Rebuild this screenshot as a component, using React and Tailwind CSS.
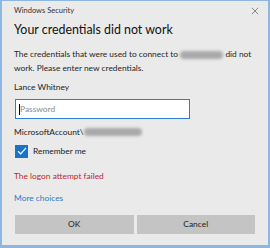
const Blur = ({ w }) => (
  <span className={`inline-block h-[8px] ${w} rounded-sm bg-[#a9a9a9] blur-[1.5px] align-middle`}></span>
);

export default function App() {
  return (
    <div className="w-[270px] h-[248px] overflow-hidden bg-[#8cb7e2] pt-px px-[2px] pb-[3px] font-['Lato',sans-serif]">
      <div className="h-full bg-[#eaeaea] text-[#1a1a1a]">
        {/* Title bar */}
        <div className="h-5 flex items-center justify-between pl-3 pr-[9px]">
          <span className="text-[7.5px] text-[#333]">Windows Security</span>
          <svg className="w-[8px] h-[8px]" viewBox="0 0 10 10" stroke="#6f6f6f" strokeWidth="1">
            <path d="M1 1L9 9M9 1L1 9" />
          </svg>
        </div>

        <div className="px-[12px]">
          <h1 className="text-[12.4px] leading-[18px] text-[#111]">Your credentials did not work</h1>

          <p className="mt-[8px] text-[8.4px] leading-[14px] text-[#1f1f1f] whitespace-nowrap">
            The credentials that were used to connect to <Blur w="w-[43px]" /> did not
            <br />
            work. Please enter new credentials.
          </p>

          <div className="mt-[5px] text-[8.4px] leading-[14px]">Lance Whitney</div>

          <div className="mt-[5px] ml-px w-[175px] h-[20px] border border-[#2d7ed3] bg-white flex items-center pl-[3px]">
            <span className="w-px h-[11px] bg-black"></span>
            <span className="text-[8.4px] text-[#8a8a8a]">Password</span>
          </div>

          <div className="mt-[6px] text-[8.4px] leading-[14px] flex items-center">
            MicrosoftAccount\<Blur w="w-[58px]" />
          </div>

          <div className="mt-[5px] ml-px flex items-center gap-[5px] h-[14px]">
            <span className="w-[13px] h-[13px] bg-[#1a73c9] flex items-center justify-center">
              <svg className="w-[10px] h-[10px]" viewBox="0 0 10 10" fill="none" stroke="white" strokeWidth="1.2">
                <path d="M1 5.2L3.7 7.8L9 1.8" />
              </svg>
            </span>
            <span className="text-[8.4px]">Remember me</span>
          </div>

          <div className="mt-[11px] text-[8.4px] leading-[14px] text-[#c4262e]">The logon attempt failed</div>

          <div className="mt-[8px] text-[8.4px] leading-[14px] text-[#2b7bc4]">More choices</div>

          <div className="mt-[10px] ml-px mr-px flex gap-[3px]">
            <button className="flex-1 h-[19px] bg-[#c4c4c4] text-[8.4px] text-[#222]">OK</button>
            <button className="flex-1 h-[19px] bg-[#c4c4c4] text-[8.4px] text-[#222]">Cancel</button>
          </div>
        </div>
      </div>
    </div>
  );
}
